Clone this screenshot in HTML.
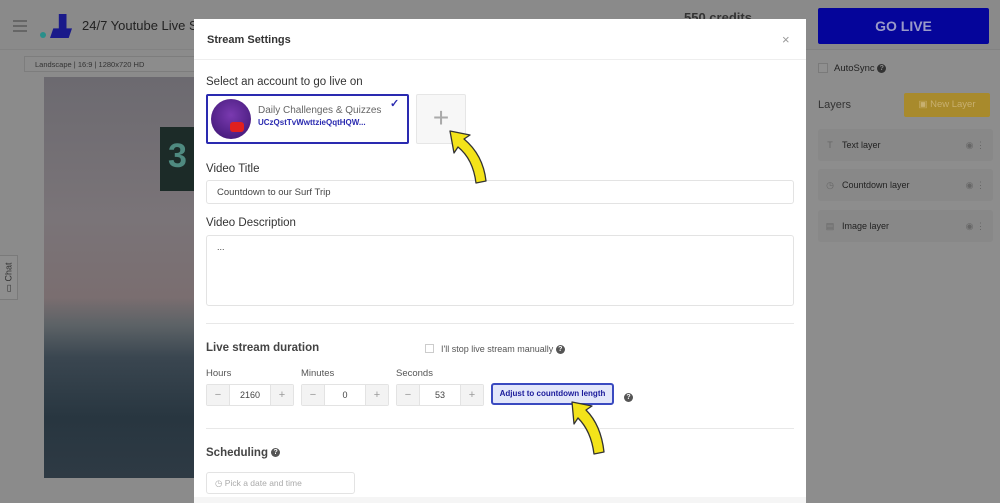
<!DOCTYPE html>
<html><head><style>
*{box-sizing:border-box;margin:0;padding:0}
body{width:1000px;height:503px;overflow:hidden;font-family:"Liberation Sans",Arial,sans-serif;background:#8b8b8b;position:relative;color:#333}
.abs{position:absolute}
.lbl{font-size:11px;color:#333}
.h{font-size:11.5px;color:#333}
.inp{border:1px solid #e3e3e3;border-radius:3px;background:#fff;position:absolute}
.num{position:absolute;height:22px;border:1px solid #e3e3e3;border-radius:2px;background:#fff;display:flex;font-size:9px;color:#444}
.num span{display:flex;align-items:center;justify-content:center}
.num .b{width:22px;background:#f3f3f3;color:#999;font-size:11px}
.num .v{flex:1;border-left:1px solid #e3e3e3;border-right:1px solid #e3e3e3}
.q{display:inline-block;width:9px;height:9px;border-radius:50%;background:#555;color:#fff;font-size:7px;text-align:center;line-height:9px;font-weight:bold;vertical-align:middle}
.layer{position:absolute;left:818px;width:175px;height:32px;background:#888;border-radius:3px;font-size:9px;color:#222;display:flex;align-items:center}
</style></head><body>
<div class="abs" style="left:0;top:0;width:1000px;height:50px;background:#8a8a8a;border-bottom:1px solid #828282"></div>
<div class="abs" style="left:13px;top:20px;width:14px;height:2px;background:#666;box-shadow:0 5px 0 #666,0 10px 0 #666"></div>
<div class="abs" style="left:40px;top:32px;width:6px;height:6px;border-radius:50%;background:#2a8f8a"></div>
<div class="abs" style="left:50px;top:14px;width:22px;height:24px;background:#1a1a8a;clip-path:polygon(40% 0,75% 0,75% 60%,100% 60%,85% 100%,0 100%,15% 60%,40% 60%)"></div>
<div class="abs" style="left:82px;top:18px;font-size:13px;color:#222">24/7 Youtube Live St</div>
<div class="abs" style="left:684px;top:10px;font-size:13px;color:#333;font-weight:bold">550 credits</div>
<div class="abs" style="left:818px;top:8px;width:171px;height:36px;background:#05059a;border-radius:2px;color:#9a9ac8;font-weight:bold;font-size:14px;text-align:center;line-height:36px">GO LIVE</div>
<div class="abs" style="left:24px;top:56px;width:172px;height:16px;border:1px solid #7d7d7d;font-size:7.5px;color:#333;padding:3px 10px;background:#8c8c8c">Landscape | 16:9 | 1280x720 HD</div>
<div class="abs" style="left:44px;top:77px;width:152px;height:401px;background:linear-gradient(#6c6a70 0%,#7a7478 35%,#7a6e70 55%,#5c6266 62%,#3a4650 70%,#283640 85%,#2e3a44 100%)"></div>
<div class="abs" style="left:160px;top:127px;width:36px;height:64px;background:#1c2b28;color:#4f8a80;font-size:34px;font-weight:bold;padding:10px 8px">3</div>
<div class="abs" style="left:0;top:255px;width:18px;height:45px;background:#8e8e8e;border:1px solid #7a7a7a;border-left:none"></div>
<div class="abs" style="left:-6px;top:272px;font-size:9px;color:#333;transform:rotate(-90deg)">▭ Chat</div>
<div class="abs" style="left:806px;top:50px;width:194px;height:453px;background:#8d8d8d"></div>
<div class="abs" style="left:818px;top:63px;width:10px;height:10px;border:1px solid #7a7a7a;background:#8f8f8f"></div>
<div class="abs" style="left:834px;top:63px;font-size:9.5px;color:#222">AutoSync <span class="q" style="background:#333;color:#8d8d8d">?</span></div>
<div class="abs" style="left:818px;top:99px;font-size:11px;color:#333">Layers</div>
<div class="abs" style="left:904px;top:93px;width:86px;height:24px;background:#a88a2c;border-radius:2px;color:#c8b070;font-size:9.5px;text-align:center;line-height:24px">▣ New Layer</div>
<div class="layer" style="top:129px"><span style="width:24px;text-align:center;color:#666">T</span>Text layer<span style="margin-left:auto;color:#666;margin-right:8px">◉ ⋮</span></div>
<div class="layer" style="top:169px"><span style="width:24px;text-align:center;color:#666">◷</span>Countdown layer<span style="margin-left:auto;color:#666;margin-right:8px">◉ ⋮</span></div>
<div class="layer" style="top:210px"><span style="width:24px;text-align:center;color:#666">▤</span>Image layer<span style="margin-left:auto;color:#666;margin-right:8px">◉ ⋮</span></div>
<div class="abs" style="left:194px;top:19px;width:612px;height:484px;background:#fff">
 <div class="abs" style="left:0;top:0;width:612px;height:41px;border-bottom:1px solid #eee"></div>
 <div class="abs" style="left:13px;top:15px;font-size:11px;font-weight:bold;color:#333">Stream Settings</div>
 <div class="abs" style="left:588px;top:13px;font-size:13px;color:#999">×</div>
 <div class="abs h" style="left:12px;top:57px">Select an account to go live on</div>
 <div class="abs" style="left:12px;top:75px;width:203px;height:50px;border:2px solid #2a2ab0;border-radius:2px"></div>
 <div class="abs" style="left:17px;top:80px;width:40px;height:40px;border-radius:50%;background:radial-gradient(circle at 50% 40%,#7a3ab0,#3a1470)"></div>
 <div class="abs" style="left:36px;top:103px;width:14px;height:10px;background:#e02020;border-radius:3px"></div>
 <div class="abs" style="left:64px;top:86px;font-size:10px;color:#666">Daily Challenges &amp; Quizzes</div>
 <div class="abs" style="left:64px;top:99px;font-size:8px;color:#2a2ab0;font-weight:bold">UCzQstTvWwttzieQqtHQW...</div>
 <div class="abs" style="left:196px;top:78px;font-size:11px;color:#2a2ab0;font-weight:bold">✓</div>
 <div class="abs" style="left:222px;top:75px;width:50px;height:50px;border:1px solid #e6e6e6;background:#f7f7f7;border-radius:2px;font-size:28px;color:#aaa;text-align:center;line-height:46px;font-weight:200">+</div>
 <div class="abs h" style="left:12px;top:144px">Video Title</div>
 <div class="inp" style="left:12px;top:161px;width:588px;height:24px;font-size:9.5px;color:#444;padding:6px 10px">Countdown to our Surf Trip</div>
 <div class="abs h" style="left:12px;top:198px">Video Description</div>
 <div class="inp" style="left:12px;top:216px;width:588px;height:71px;font-size:9px;color:#444;padding:6px 10px">...</div>
 <div class="abs" style="left:12px;top:304px;width:588px;border-top:1px solid #e8e8e8"></div>
 <div class="abs h" style="left:12px;top:323px;font-weight:bold;color:#444">Live stream duration</div>
 <div class="abs" style="left:231px;top:325px;width:9px;height:9px;border:1px solid #ccc"></div>
 <div class="abs" style="left:247px;top:325px;font-size:9px;color:#555">I'll stop live stream manually <span class="q">?</span></div>
 <div class="abs lbl" style="left:12px;top:349px;font-size:9.5px;color:#555">Hours</div>
 <div class="abs lbl" style="left:107px;top:349px;font-size:9.5px;color:#555">Minutes</div>
 <div class="abs lbl" style="left:202px;top:349px;font-size:9.5px;color:#555">Seconds</div>
 <div class="num" style="left:12px;top:365px;width:88px"><span class="b">−</span><span class="v">2160</span><span class="b">+</span></div>
 <div class="num" style="left:107px;top:365px;width:88px"><span class="b">−</span><span class="v">0</span><span class="b">+</span></div>
 <div class="num" style="left:202px;top:365px;width:88px"><span class="b">−</span><span class="v">53</span><span class="b">+</span></div>
 <div class="abs" style="left:297px;top:364px;width:123px;height:22px;border:2px solid #3a4ac0;border-radius:3px;background:#e2e6fa;font-size:8px;font-weight:bold;color:#1a1a9a;text-align:center;line-height:18px">Adjust to countdown length</div>
 <div class="abs" style="left:430px;top:370px"><span class="q">?</span></div>
 <div class="abs" style="left:12px;top:409px;width:588px;border-top:1px solid #e8e8e8"></div>
 <div class="abs h" style="left:12px;top:428px;font-weight:bold;color:#444">Scheduling <span class="q">?</span></div>
 <div class="inp" style="left:12px;top:453px;width:149px;height:22px;font-size:8.5px;color:#aaa;padding:5px 8px">◷ Pick a date and time</div>
 <div class="abs" style="left:0;top:478px;width:612px;height:6px;background:#f5f5f5"></div>
</div>
<svg class="abs" style="left:440px;top:125px" width="60" height="62" viewBox="0 0 60 62"><path d="M10 6 L30 10 L24 14 C36 24 44 38 46 56 L36 58 C34 42 28 30 18 22 L14 28 Z" fill="#f3e31a" stroke="#333" stroke-width="1.3" stroke-linejoin="round"/></svg>
<svg class="abs" style="left:560px;top:400px" width="60" height="60" viewBox="0 0 60 60"><path d="M12 2 L32 6 L26 10 C36 20 42 34 44 52 L34 54 C32 38 26 26 18 18 L14 24 Z" fill="#f3e31a" stroke="#333" stroke-width="1.3" stroke-linejoin="round"/></svg>
</body></html>
